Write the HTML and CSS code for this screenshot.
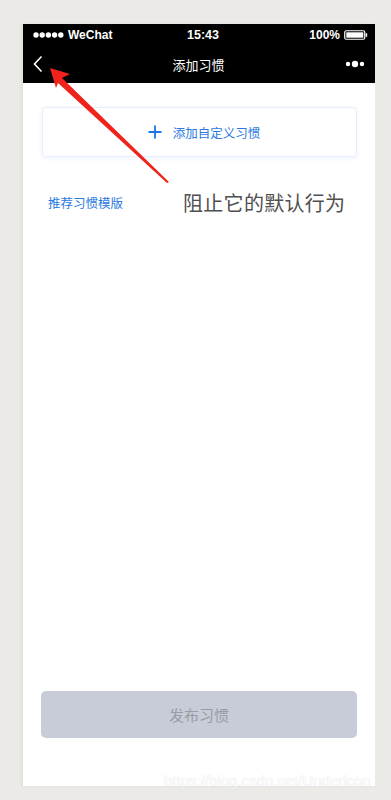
FILE: index.html
```html
<!DOCTYPE html>
<html lang="zh">
<head>
<meta charset="utf-8">
<title>添加习惯</title>
<link rel="stylesheet" href="styles.css">
</head>
<body>
<div class="phone">
  <div class="status">
    <span class="carrier">
      <svg class="signal" width="31" height="6" viewBox="0 0 31 6"><circle cx="3" cy="3" r="2.7" fill="#fff"/><circle cx="9.2" cy="3" r="2.7" fill="#fff"/><circle cx="15.4" cy="3" r="2.7" fill="#fff"/><circle cx="21.6" cy="3" r="2.7" fill="#fff"/><circle cx="27.8" cy="3" r="2.7" fill="#fff"/></svg>
      <span>WeChat</span>
    </span>
    <span class="time">15:43</span>
    <span class="battery">100%
      <svg class="batt" width="24" height="10" viewBox="0 0 24 10"><rect x="0.75" y="0.75" width="20" height="8.5" rx="1.5" fill="none" stroke="#fff" stroke-width="1.2"/><rect x="2.3" y="2.3" width="17" height="5.4" fill="#fff"/><rect x="21.6" y="3.3" width="1.6" height="3.4" fill="#fff"/></svg>
    </span>
  </div>
  <div class="nav">
    <svg class="back" width="12" height="18" viewBox="0 0 12 18"><path d="M9.5 1.5 L2.5 9 L9.5 16.5" fill="none" stroke="#fff" stroke-width="1.6"/></svg>
    <span class="title">添加习惯</span>
    <svg class="more" width="20" height="8" viewBox="0 0 20 8"><circle cx="3" cy="4" r="2.2" fill="#fff"/><circle cx="10" cy="4" r="3.2" fill="#fff"/><circle cx="17" cy="4" r="2.2" fill="#fff"/></svg>
  </div>
  <div class="content">
    <div class="add-card">
      <svg class="plus" width="14" height="14" viewBox="0 0 14 14"><path d="M7 0.5 V13.5 M0.5 7 H13.5" stroke="#1a73e8" stroke-width="1.8"/></svg>
      <span>添加自定义习惯</span>
    </div>
    <div class="rec-row">
      <span class="rec">推荐习惯模版</span>
      <span class="note">阻止它的默认行为</span>
    </div>
  </div>
  <div class="publish">发布习惯</div>
</div>
<svg class="arrow" width="391" height="800" viewBox="0 0 391 800">
  <polygon points="50,68 70,74 62,78 169,182 167,183 58,83 56,88" fill="#f0231c"/>
</svg>
<div class="watermark">https://blog.csdn.net/Underlcon</div>
</body>
</html>
```

FILE: styles.css
```css
* { box-sizing: border-box; }
html, body { margin: 0; padding: 0; }
body {
  background: #ebeae6;
  width: 391px;
  height: 800px;
  position: relative;
  overflow: hidden;
  font-family: "Liberation Sans", "Noto Sans CJK SC", sans-serif;
}
.phone {
  margin: 24px 0 0 23px;
  width: 352px;
  height: 762px;
  background: #fff;
  display: flex;
  flex-direction: column;
  box-shadow: -2px 0 3px rgba(0,0,0,0.05);
}
.status {
  height: 21px;
  background: #000;
  color: #fff;
  font-size: 12px;
  font-weight: bold;
  display: grid;
  grid-template-columns: 1fr auto 1fr;
  align-items: center;
  padding: 0 7px 0 10px;
}
.carrier { display: flex; align-items: center; gap: 4px; }
.signal { display: block; }
.time { font-size: 12.5px; margin-left: 5px; }
.battery { display: flex; align-items: center; justify-content: flex-end; gap: 4px; }
.nav {
  height: 38px;
  background: #000;
  display: flex;
  align-items: center;
  justify-content: space-between;
  padding: 0 10px 0 9px;
}
.back { display: block; }
.title {
  color: #fff;
  font-family: "Noto Sans CJK SC", sans-serif;
  font-size: 13px;
  margin-left: 8px;
}
.more { display: block; }
.content { flex: 1; }
.add-card {
  margin: 24px 18px 0 19px;
  height: 50px;
  border: 1px solid #e6edfb;
  border-radius: 4px;
  box-shadow: 0 1px 4px rgba(40, 90, 220, 0.08);
  display: flex;
  align-items: center;
  justify-content: center;
  gap: 11px;
  color: #2a7ae2;
  font-family: "Noto Sans CJK SC", sans-serif;
  font-size: 12.5px;
  padding-left: 9px;
}
.plus { display: block; }
.rec-row {
  display: flex;
  align-items: center;
  margin: 31px 0 0 25px;
}
.rec {
  color: #2a7ae2;
  font-family: "Noto Sans CJK SC", sans-serif;
  font-size: 12.5px;
  width: 135px;
}
.note {
  color: #505050;
  font-family: "Noto Sans CJK SC", sans-serif;
  font-size: 20px;
  letter-spacing: 0.3px;
}
.publish {
  margin: 0 18px 48px 18px;
  height: 47px;
  background: #c8ccd8;
  border-radius: 5px;
  color: #999ca6;
  font-family: "Noto Sans CJK SC", sans-serif;
  font-size: 15px;
  display: flex;
  align-items: center;
  justify-content: center;
}
.arrow {
  position: absolute;
  left: 0;
  top: 0;
}
.watermark {
  position: absolute;
  left: 164px;
  top: 772px;
  color: rgba(255,255,255,0.9);
  text-shadow: 0 0 1px rgba(0,0,0,0.15);
  font-size: 15px;
  font-family: "Liberation Sans", sans-serif;
}
```
